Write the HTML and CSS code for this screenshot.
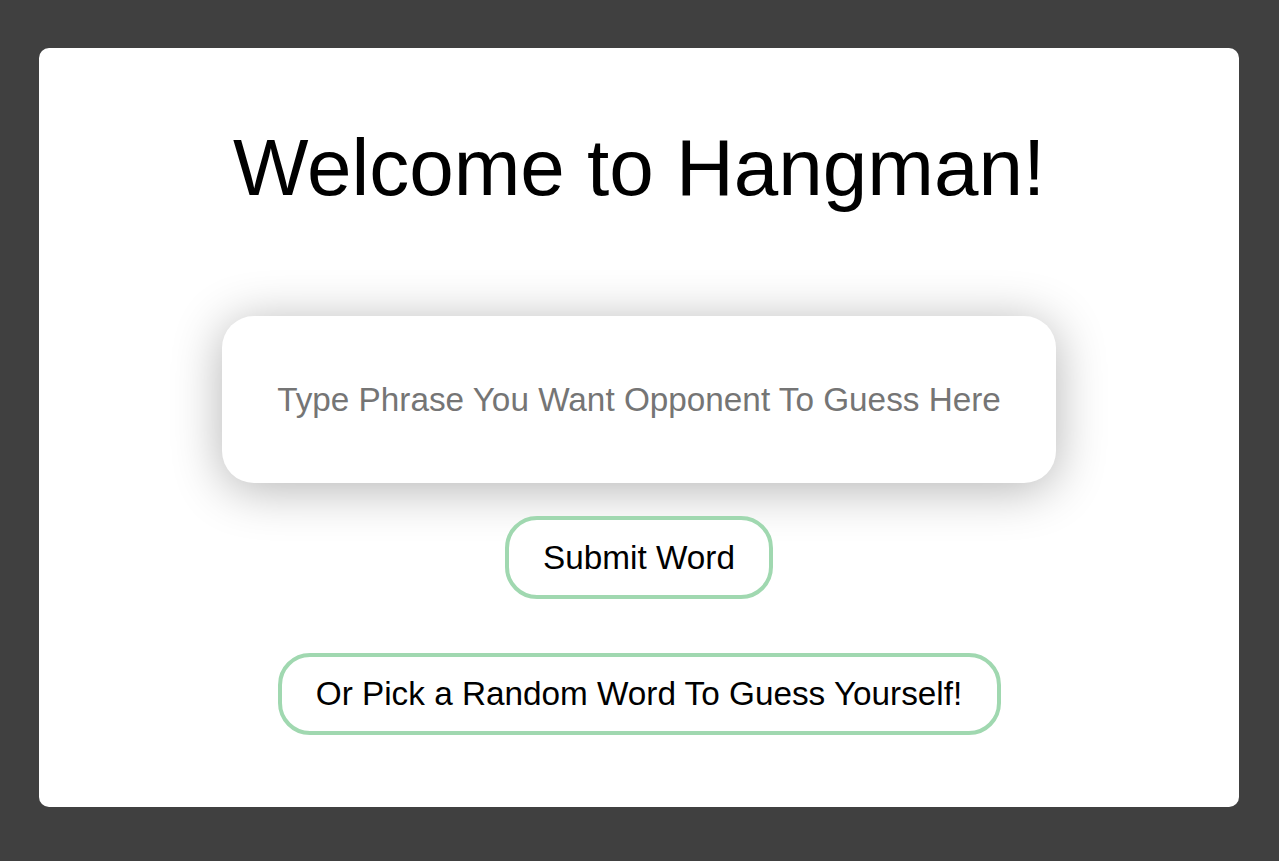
FILE: index.html
```html
<!DOCTYPE html>
<html>
<head>
<meta charset="utf-8">
<link rel="stylesheet" href="styles.css">
</head>
<body>
<div class="card">
  <h1 class="title">Welcome to Hangman!</h1>
  <input class="phrase" type="text" placeholder="Type Phrase You Want Opponent To Guess Here">
  <button class="btn submit">Submit Word</button>
  <button class="btn random">Or Pick a Random Word To Guess Yourself!</button>
</div>
</body>
</html>
```
FILE: styles.css
```css
html, body {
  margin: 0;
  padding: 0;
  background: #404040;
  height: 100%;
}
body {
  font-family: "Liberation Sans", Arial, sans-serif;
  padding-top: 48px;
  box-sizing: border-box;
}
.card {
  width: 1200px;
  height: 759px;
  margin: 0 0 0 39px;
  background: #fff;
  border-radius: 10px;
  display: flex;
  flex-direction: column;
  align-items: center;
  box-sizing: border-box;
  padding-top: 74px;
}
.title {
  margin: 0;
  font-size: 80px;
  font-weight: normal;
  line-height: 92px;
  color: #000;
}
.phrase {
  margin-top: 102px;
  width: 834px;
  height: 167px;
  box-sizing: border-box;
  border: none;
  border-radius: 32px;
  background: #fff;
  box-shadow: 0 6px 50px rgba(0, 0, 0, 0.3);
  font-family: "Liberation Sans", Arial, sans-serif;
  font-size: 33.3px;
  text-align: center;
  outline: none;
  padding: 0 20px;
}
.phrase::placeholder {
  color: #757575;
}
.btn {
  font-family: "Liberation Sans", Arial, sans-serif;
  font-size: 33.3px;
  color: #000;
  background: #fff;
  border: 4px solid #a0d8b0;
  border-radius: 32px;
  height: 83px;
  box-sizing: border-box;
  padding: 0 30px;
  cursor: pointer;
}
.submit {
  margin-top: 33px;
  width: 268px;
}
.random {
  margin-top: 54px;
  width: 723px;
  height: 82px;
}
```
